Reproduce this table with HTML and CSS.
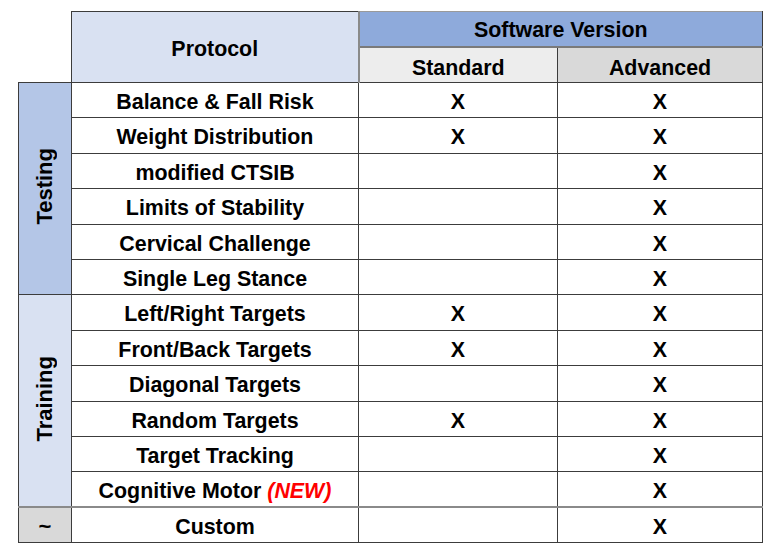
FILE: index.html
```html
<!DOCTYPE html>
<html>
<head>
<meta charset="utf-8">
<link rel="stylesheet" href="styles.css">
</head>
<body>
<table class="grid">
  <colgroup>
    <col class="c-group">
    <col class="c-proto">
    <col class="c-std">
    <col class="c-adv">
  </colgroup>
  <thead>
    <tr class="h1">
      <th class="blank" rowspan="2"></th>
      <th class="proto-h" rowspan="2">Protocol</th>
      <th class="sw-h" colspan="2">Software Version</th>
    </tr>
    <tr class="h2">
      <th class="std-h">Standard</th>
      <th class="adv-h">Advanced</th>
    </tr>
  </thead>
  <tbody>
    <tr>
      <td class="grp testing" rowspan="6"><span class="vert">Testing</span></td>
      <td>Balance &amp; Fall Risk</td><td>X</td><td>X</td>
    </tr>
    <tr><td>Weight Distribution</td><td>X</td><td>X</td></tr>
    <tr><td>modified CTSIB</td><td></td><td>X</td></tr>
    <tr><td>Limits of Stability</td><td></td><td>X</td></tr>
    <tr><td>Cervical Challenge</td><td></td><td>X</td></tr>
    <tr><td>Single Leg Stance</td><td></td><td>X</td></tr>
    <tr>
      <td class="grp training" rowspan="6"><span class="vert">Training</span></td>
      <td>Left/Right Targets</td><td>X</td><td>X</td>
    </tr>
    <tr><td>Front/Back Targets</td><td>X</td><td>X</td></tr>
    <tr><td>Diagonal Targets</td><td></td><td>X</td></tr>
    <tr><td>Random Targets</td><td>X</td><td>X</td></tr>
    <tr><td>Target Tracking</td><td></td><td>X</td></tr>
    <tr><td>Cognitive Motor <em class="new">(NEW)</em></td><td></td><td>X</td></tr>
    <tr class="last">
      <td class="grp custom">~</td>
      <td>Custom</td><td></td><td>X</td>
    </tr>
  </tbody>
</table>
</body>
</html>
```

FILE: styles.css
```css
html, body {
  margin: 0;
  padding: 0;
  background: #ffffff;
}

body {
  padding: 11px 0 0 18px;
  font-family: "Liberation Sans", Arial, sans-serif;
  color: #000;
}

.grid {
  border-collapse: collapse;
  table-layout: fixed;
  width: 744px;
  font-size: 21.4px;
  font-weight: bold;
}

.c-group { width: 53px; }
.c-proto { width: 287px; }
.c-std { width: 199px; }
.c-adv { width: 205px; }

.grid th,
.grid td {
  border: 1px solid #3c3c3c;
  padding: 0;
  text-align: center;
  vertical-align: middle;
  font-weight: bold;
  line-height: 1;
}

.grid tbody tr { height: 35.4px; }
.grid tbody td { padding-top: 5px; }

.h1 { height: 35px; }
.h2 { height: 36px; }

.sw-h { padding-top: 3px !important; }

.blank {
  border-top: none !important;
  border-left: none !important;
  background: #fff;
}

.proto-h {
  background: #d9e1f2;
  border-right: 2px solid #8a8a8a !important;
  padding-top: 6px !important;
}

.sw-h {
  background: #8eaadb;
  border-top: 1px solid #9a9a9a !important;
  border-bottom: 2px solid #7a7a7a !important;
}

.std-h {
  background: #ededed;
  padding-top: 7px !important;
}

.adv-h {
  background: #d9d9d9;
  padding-top: 7px !important;
}

.grp {
  padding-top: 0 !important;
}

.testing { background: #b4c6e7; }
.training { background: #d9e1f2; }
.custom {
  background: #d9d9d9;
  font-size: 22px;
  padding-top: 3px !important;
}

.last td { border-top: 2px solid #8a8a8a; }

.vert {
  display: inline-block;
  writing-mode: vertical-rl;
  transform: rotate(180deg);
  line-height: 1;
  font-size: 22px;
}

.new {
  color: #ff0000;
  font-style: italic;
}
```
